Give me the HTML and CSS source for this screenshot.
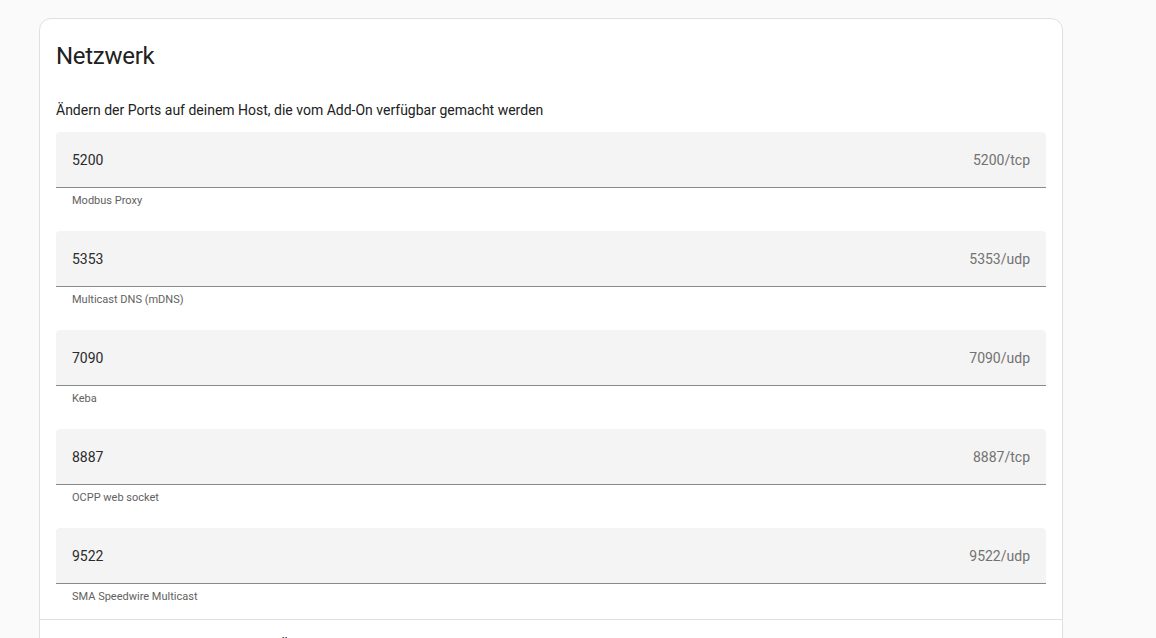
FILE: index.html
```html
<!DOCTYPE html>
<html lang="de">
<head>
<meta charset="utf-8">
<title>Netzwerk</title>
<link rel="stylesheet" href="styles.css">
</head>
<body>
<div class="page">
  <div class="card">
    <h1 class="card-header">Netzwerk</h1>
    <div class="card-content">
      <p class="description">Ändern der Ports auf deinem Host, die vom Add-On verfügbar gemacht werden</p>
      <div class="field">
        <div class="field-box"><span class="value">5200</span><span class="suffix">5200/tcp</span></div>
        <div class="helper">Modbus Proxy</div>
      </div>
      <div class="field">
        <div class="field-box"><span class="value">5353</span><span class="suffix">5353/udp</span></div>
        <div class="helper">Multicast DNS (mDNS)</div>
      </div>
      <div class="field">
        <div class="field-box"><span class="value">7090</span><span class="suffix">7090/udp</span></div>
        <div class="helper">Keba</div>
      </div>
      <div class="field">
        <div class="field-box"><span class="value">8887</span><span class="suffix">8887/tcp</span></div>
        <div class="helper">OCPP web socket</div>
      </div>
      <div class="field last">
        <div class="field-box"><span class="value">9522</span><span class="suffix">9522/udp</span></div>
        <div class="helper">SMA Speedwire Multicast</div>
      </div>
    </div>
    <div class="card-actions">
      <span class="action-label">Änderungen werden nach dem Neustart wirksam</span>
    </div>
  </div>
</div>
</body>
</html>
```

FILE: styles.css
```css
html, body {
  margin: 0;
  padding: 0;
  background: #fafafa;
  font-family: Roboto, "Noto Sans", sans-serif;
  color: #212121;
  overflow: hidden;
  height: 100%;
}

.page {
  padding: 18px 0 0 39px;
}

.card {
  width: 1022px;
  background: #ffffff;
  border: 1px solid #e0e0e0;
  border-radius: 12px;
}

.card-header {
  margin: 0;
  padding: 21px 16px 19px;
  font-size: 24px;
  font-weight: 400;
  letter-spacing: -0.012em;
  line-height: 32px;
  color: #212121;
}

.card-content {
  padding: 0 16px 14px;
}

.description {
  margin: 0 0 12px;
  padding-top: 9px;
  font-size: 14px;
  line-height: 20px;
  color: #212121;
}

.field {
  margin-bottom: 22px;
}

.field.last {
  margin-bottom: 0;
}

.field-box {
  height: 55px;
  background: #f4f4f4;
  border-bottom: 1px solid #8a8a8a;
  border-radius: 4px 4px 0 0;
  display: flex;
  align-items: center;
  justify-content: space-between;
  padding: 0 16px;
  font-size: 14px;
}

.value {
  color: #2b2b2b;
}

.suffix {
  color: #727272;
}

.helper {
  padding: 5px 16px 0;
  font-size: 11px;
  line-height: 16px;
  color: #616161;
}

.card-actions {
  border-top: 1px solid #e0e0e0;
  padding: 15px 16px 8px 240px;
  height: 40px;
}

.action-label {
  font-size: 14px;
  line-height: 20px;
  color: #212121;
}
```
